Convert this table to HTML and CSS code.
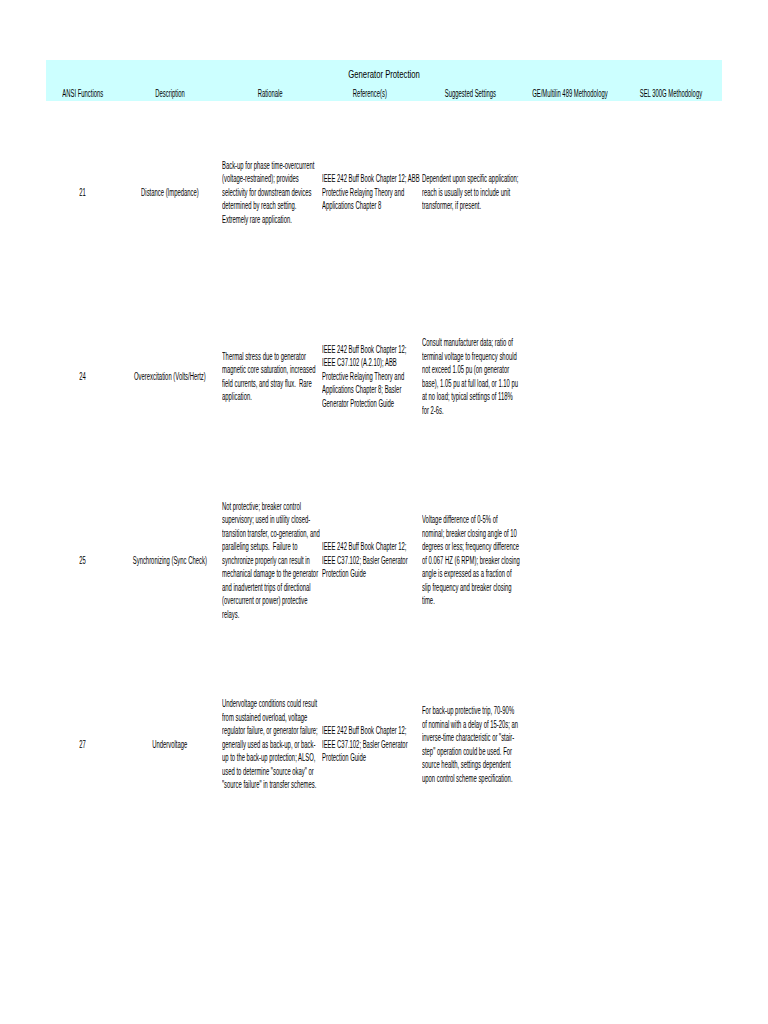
FILE: index.html
```html
<!DOCTYPE html>
<html lang="en">
<head>
<meta charset="utf-8">
<title>Generator Protection</title>
<link rel="stylesheet" href="styles.css">
</head>
<body>
<div class="page">
<table class="sheet">
  <colgroup>
    <col class="c1"><col class="c2"><col class="c3"><col class="c4"><col class="c5"><col class="c6"><col class="c7">
  </colgroup>
  <thead>
    <tr class="title-row">
      <th colspan="7"><div class="cc"><span class="title">Generator Protection</span></div></th>
    </tr>
    <tr class="head-row">
      <th><div class="cc"><span class="t">ANSI Functions</span></div></th>
      <th><div class="cc"><span class="t">Description</span></div></th>
      <th><div class="cc"><span class="t">Rationale</span></div></th>
      <th><div class="cc"><span class="t">Reference(s)</span></div></th>
      <th><div class="cc"><span class="t">Suggested Settings</span></div></th>
      <th><div class="cc"><span class="t">GE/Multilin 489 Methodology</span></div></th>
      <th><div class="cc"><span class="t">SEL 300G Methodology</span></div></th>
    </tr>
  </thead>
  <tbody>
    <tr>
      <td><div class="cc"><span class="t">21</span></div></td>
      <td><div class="cc"><span class="t">Distance (Impedance)</span></div></td>
      <td><div class="cl"><span class="t">Back-up for phase time-overcurrent<br>(voltage-restrained); provides<br>selectivity for downstream devices<br>determined by reach setting.<br>Extremely rare application.</span></div></td>
      <td><div class="cl"><span class="t">IEEE 242 Buff Book Chapter 12; ABB<br>Protective Relaying Theory and<br>Applications Chapter 8</span></div></td>
      <td><div class="cl"><span class="t">Dependent upon specific application;<br>reach is usually set to include unit<br>transformer, if present.</span></div></td>
      <td></td>
      <td></td>
    </tr>
    <tr>
      <td><div class="cc"><span class="t">24</span></div></td>
      <td><div class="cc"><span class="t">Overexcitation (Volts/Hertz)</span></div></td>
      <td><div class="cl"><span class="t">Thermal stress due to generator<br>magnetic core saturation, increased<br>field currents, and stray flux.&nbsp; Rare<br>application.</span></div></td>
      <td><div class="cl"><span class="t">IEEE 242 Buff Book Chapter 12;<br>IEEE C37.102 (A.2.10); ABB<br>Protective Relaying Theory and<br>Applications Chapter 8; Basler<br>Generator Protection Guide</span></div></td>
      <td><div class="cl"><span class="t">Consult manufacturer data; ratio of<br>terminal voltage to frequency should<br>not exceed 1.05 pu (on generator<br>base), 1.05 pu at full load, or 1.10 pu<br>at no load; typical settings of 118%<br>for 2-6s.</span></div></td>
      <td></td>
      <td></td>
    </tr>
    <tr>
      <td><div class="cc"><span class="t">25</span></div></td>
      <td><div class="cc"><span class="t">Synchronizing (Sync Check)</span></div></td>
      <td><div class="cl"><span class="t">Not protective; breaker control<br>supervisory; used in utility closed-<br>transition transfer, co-generation, and<br>paralleling setups.&nbsp; Failure to<br>synchronize properly can result in<br>mechanical damage to the generator<br>and inadvertent trips of directional<br>(overcurrent or power) protective<br>relays.</span></div></td>
      <td><div class="cl"><span class="t">IEEE 242 Buff Book Chapter 12;<br>IEEE C37.102; Basler Generator<br>Protection Guide</span></div></td>
      <td><div class="cl"><span class="t">Voltage difference of 0-5% of<br>nominal; breaker closing angle of 10<br>degrees or less; frequency difference<br>of 0.067 HZ (6 RPM); breaker closing<br>angle is expressed as a fraction of<br>slip frequency and breaker closing<br>time.</span></div></td>
      <td></td>
      <td></td>
    </tr>
    <tr>
      <td><div class="cc"><span class="t">27</span></div></td>
      <td><div class="cc"><span class="t">Undervoltage</span></div></td>
      <td><div class="cl"><span class="t">Undervoltage conditions could result<br>from sustained overload, voltage<br>regulator failure, or generator failure;<br>generally used as back-up, or back-<br>up to the back-up protection; ALSO,<br>used to determine "source okay" or<br>"source failure" in transfer schemes.</span></div></td>
      <td><div class="cl"><span class="t">IEEE 242 Buff Book Chapter 12;<br>IEEE C37.102; Basler Generator<br>Protection Guide</span></div></td>
      <td><div class="cl"><span class="t">For back-up protective trip, 70-90%<br>of nominal with a delay of 15-20s; an<br>inverse-time characteristic or "stair-<br>step" operation could be used. For<br>source health, settings dependent<br>upon control scheme specification.</span></div></td>
      <td></td>
      <td></td>
    </tr>
  </tbody>
</table>
</div>
</body>
</html>
```

FILE: styles.css
```css
html, body {
  margin: 0;
  padding: 0;
  background: #ffffff;
}

body {
  font-family: "Liberation Sans", Arial, sans-serif;
  color: #000000;
}

.page {
  padding: 60px 46px 0 46px;
}

.sheet {
  width: 676px;
  table-layout: fixed;
  border-collapse: collapse;
  border-spacing: 0;
}

.c1 { width: 74px; }
.c2, .c3, .c4, .c5, .c6 { width: 100px; }
.c7 { width: 102px; }

.sheet th,
.sheet td {
  padding: 0;
  vertical-align: middle;
  font-weight: normal;
  overflow: visible;
}

.sheet thead th {
  background: #ccffff;
}

.title-row th {
  height: 27px;
}

.head-row th {
  height: 13px;
}

.sheet tbody td {
  height: 184px;
}

.cc {
  display: flex;
  justify-content: center;
}

.cl {
  display: flex;
  justify-content: flex-start;
  padding-left: 2px;
}

.t {
  display: inline-block;
  white-space: nowrap;
  font-size: 10px;
  line-height: 13.5px;
  transform: scaleX(0.59);
}

.cc .t {
  transform-origin: center center;
}

.cl .t {
  transform-origin: left center;
}

.title {
  display: inline-block;
  white-space: nowrap;
  font-size: 11px;
  line-height: 14px;
  transform: scaleX(0.7);
  transform-origin: center center;
}
```
